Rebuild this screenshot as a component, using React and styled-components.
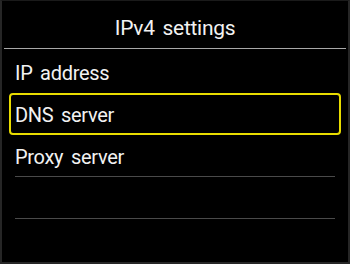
import React from 'react';
import styled, { createGlobalStyle } from 'styled-components';

const GlobalStyle = createGlobalStyle`
  html, body {
    margin: 0;
    padding: 0;
    background: #000;
  }
`;

const Screen = styled.div`
  box-sizing: border-box;
  width: 350px;
  height: 264px;
  background: #000;
  border: 2px solid #262626;
  border-top: 1px solid #1a1a1a;
  font-family: Roboto, "Liberation Sans", sans-serif;
  color: #f2f2f2;
  letter-spacing: -0.3px;
  word-spacing: 3px;
  display: flex;
  flex-direction: column;
  overflow: hidden;
`;

const Header = styled.div`
  box-sizing: border-box;
  height: 48px;
  margin: 0 2px;
  padding-top: 6px;
  border-bottom: 1px solid #a8a8a8;
  display: flex;
  align-items: center;
  justify-content: center;
  font-size: 21px;
`;

const List = styled.div`
  display: flex;
  flex-direction: column;
  padding: 2px 7px 0;
`;

const Row = styled.div`
  box-sizing: border-box;
  height: 42px;
  display: flex;
  align-items: center;
  padding: 1px 4px 0;
  font-size: 20px;
  border: 2px solid ${(p) => (p.$selected ? '#e8dc00' : 'transparent')};
  border-radius: 4px;
  position: relative;

  &::after {
    content: '';
    display: ${(p) => (p.$divider ? 'block' : 'none')};
    position: absolute;
    left: 4px;
    right: 4px;
    bottom: -2px;
    height: 1px;
    background: #4a4a4a;
  }
`;

const items = [
  { label: 'IP address' },
  { label: 'DNS server', selected: true },
  { label: 'Proxy server', divider: true },
  { label: '', divider: true },
  { label: '' },
];

export default function App() {
  return (
    <>
      <GlobalStyle />
      <Screen>
        <Header>IPv4 settings</Header>
        <List>
          {items.map((it, i) => (
            <Row key={i} $selected={it.selected} $divider={it.divider}>
              {it.label}
            </Row>
          ))}
        </List>
      </Screen>
    </>
  );
}
